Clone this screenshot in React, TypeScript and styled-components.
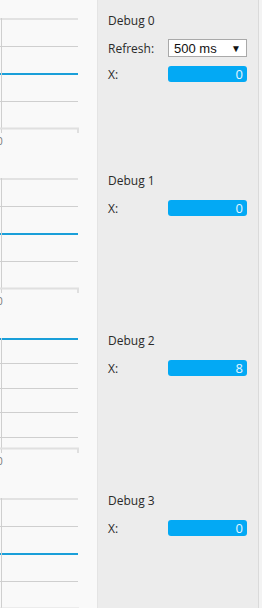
import React from 'react';
import styled, { createGlobalStyle } from 'styled-components';

const GlobalStyle = createGlobalStyle`
  html, body {
    margin: 0;
    padding: 0;
    background: #f9f9f9;
    font-family: "Open Sans", "Liberation Sans", sans-serif;
  }
`;

const Page = styled.div`
  display: flex;
  width: 262px;
  height: 608px;
  overflow: hidden;
  background: #f9f9f9;
`;

const ChartColumn = styled.div`
  width: 97px;
  display: flex;
  flex-direction: column;
  flex-shrink: 0;
`;

const ChartCell = styled.div`
  height: 160px;
  flex-shrink: 0;
  svg {
    display: block;
  }
`;

const Panel = styled.div`
  width: 160px;
  flex-shrink: 0;
  background: #ececec;
  border-left: 1px solid #e4e4e4;
  border-right: 1px solid #dadada;
  display: flex;
  flex-direction: column;
`;

const Edge = styled.div`
  flex: 1;
  background: #f3f3f3;
`;

const DebugBlock = styled.div`
  height: 160px;
  flex-shrink: 0;
  box-sizing: border-box;
  padding: 13px 10px 0 10px;
  display: flex;
  flex-direction: column;
  gap: 8px;
`;

const Title = styled.div`
  font-size: 12px;
  line-height: 16px;
  color: #2a2a2a;
  margin-bottom: 2px;
`;

const Row = styled.div`
  display: flex;
  align-items: center;
  height: 18px;
`;

const Label = styled.div`
  width: 60px;
  font-size: 12px;
  color: #2a2a2a;
`;

const SelectBox = styled.div`
  width: 79px;
  height: 18px;
  box-sizing: border-box;
  background: #fff;
  border: 1px solid #a9a9a9;
  display: flex;
  align-items: center;
  justify-content: space-between;
  padding: 0 5px 0 5px;
  font-family: "Liberation Sans", Arial, sans-serif;
  font-size: 13px;
  color: #111;
`;

const Arrow = styled.span`
  font-size: 10px;
  color: #111;
`;

const ValueBox = styled.div`
  width: 79px;
  height: 16px;
  box-sizing: border-box;
  background: #03a9f4;
  border-radius: 3px;
  color: #e6f6ff;
  font-size: 13px;
  line-height: 16px;
  text-align: right;
  padding-right: 4px;
`;

type ChartSpec = { grid: number[]; value: number };

const Chart: React.FC<ChartSpec> = ({ grid, value }) => (
  <svg width={97} height={160}>
    <line x1={0} y1={19} x2={78} y2={19} stroke="#e2e2e2" strokeWidth={2} />
    {grid.map((y) => (
      <line key={y} x1={0} y1={y + 0.5} x2={78} y2={y + 0.5} stroke="#cfcfcf" strokeWidth={1} />
    ))}
    <line x1={0} y1={value} x2={78} y2={value} stroke="#1a9fd9" strokeWidth={2} />
    <line x1={1.5} y1={18} x2={1.5} y2={133} stroke="#cfcfcf" strokeWidth={1} />
    <path d="M0 128.5 H78 V133" fill="none" stroke="#e0e0e0" strokeWidth={2} />
    <text x={-3} y={145} fontSize={10} fill="#777" fontFamily="Open Sans, sans-serif">
      0
    </text>
  </svg>
);

const charts: ChartSpec[] = [
  { grid: [46, 101], value: 74 },
  { grid: [46, 101], value: 74 },
  { grid: [43, 68, 92, 117], value: 19 },
  { grid: [46, 101], value: 74 },
];

const debugs = [
  { name: 'Debug 0', refresh: true, x: 0 },
  { name: 'Debug 1', refresh: false, x: 0 },
  { name: 'Debug 2', refresh: false, x: 8 },
  { name: 'Debug 3', refresh: false, x: 0 },
];

export default function App() {
  return (
    <>
      <GlobalStyle />
      <Page>
        <ChartColumn>
          {charts.map((c, i) => (
            <ChartCell key={i}>
              <Chart {...c} />
            </ChartCell>
          ))}
        </ChartColumn>
        <Panel>
          {debugs.map((d) => (
            <DebugBlock key={d.name}>
              <Title>{d.name}</Title>
              {d.refresh && (
                <Row>
                  <Label>Refresh:</Label>
                  <SelectBox>
                    500 ms <Arrow>▼</Arrow>
                  </SelectBox>
                </Row>
              )}
              <Row>
                <Label>X:</Label>
                <ValueBox>{d.x}</ValueBox>
              </Row>
            </DebugBlock>
          ))}
        </Panel>
        <Edge />
      </Page>
    </>
  );
}
